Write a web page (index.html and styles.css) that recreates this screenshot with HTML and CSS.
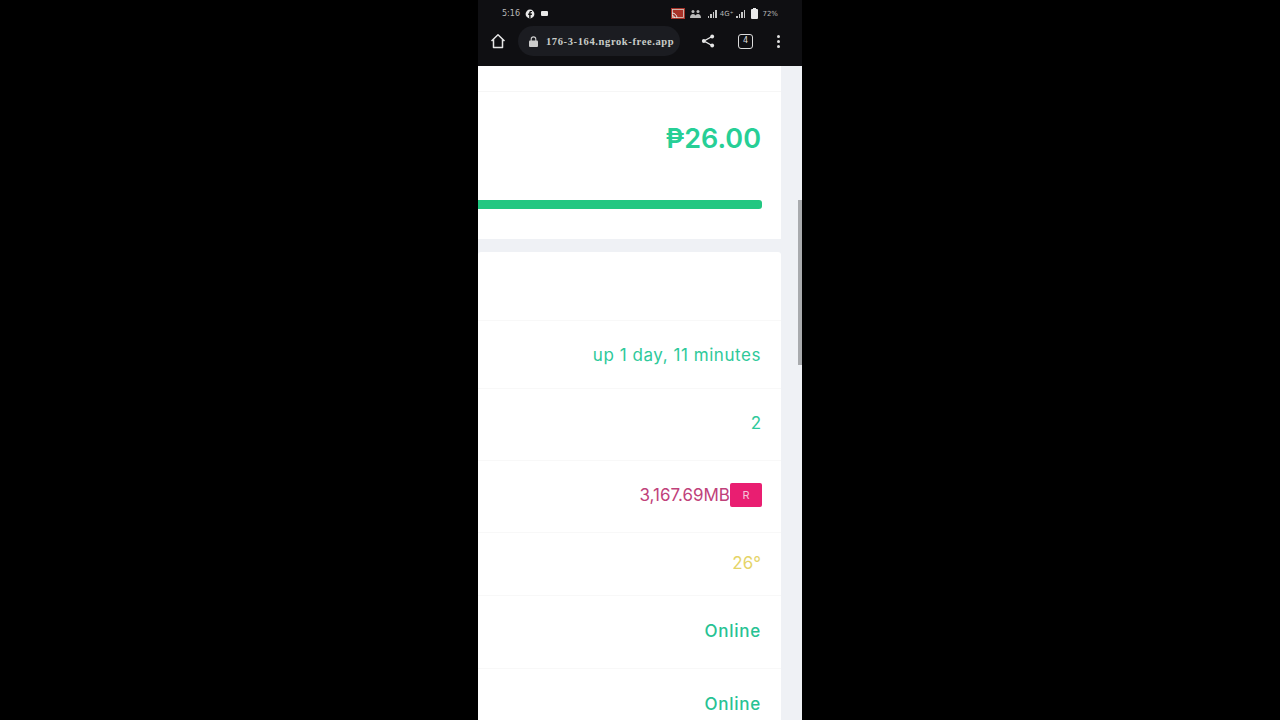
FILE: index.html
```html
<!DOCTYPE html>
<html lang="en">
<head>
<meta charset="utf-8">
<title>Status</title>
<link rel="stylesheet" href="styles.css">
</head>
<body>
<div class="phone">
  <div class="status">
    <div class="status-left">
      <span>5:16</span>
      <svg class="fb" viewBox="0 0 10 10"><circle cx="5" cy="5" r="4.4" fill="#e8e8e8"/><path d="M5.6 9.4V6h1.2l.2-1.4H5.6v-.8c0-.5.2-.7.7-.7H7V2h-1C4.800 2 4.200 2.700 4.200 3.700v.9H3.200V6h1v3.400z" fill="#111"/></svg>
      <span class="rec"></span>
    </div>
    <div class="status-right">
      <svg class="cast" viewBox="0 0 14 11"><rect width="14" height="11" fill="#a83228"/><rect x="1.500" y="1.500" width="11" height="8" fill="none" stroke="#d8d0c8" stroke-width=".8"/><path d="M1 5a5 5 0 0 1 5 5M1 7.500a2.500 2.500 0 0 1 2.500 2.500" fill="none" stroke="#e8e8e8"/></svg>
      <svg class="people" viewBox="0 0 11 9"><g fill="#bbb"><circle cx="3" cy="2.500" r="1.500"/><circle cx="8" cy="2.500" r="1.500"/><path d="M0 9c0-3 1.500-4 3-4s2 .8 2.500 1.500C6 5.800 6.500 5 8 5s3 1 3 4z"/></g></svg>
      <span class="bars"><i class="b1"></i><i class="b2"></i><i class="b3"></i><i class="b4"></i></span>
      <span class="net">4G⁺</span>
      <span class="bars"><i class="b1"></i><i class="b2"></i><i class="b3"></i><i class="b4"></i></span>
      <svg class="batt" viewBox="0 0 7 11"><rect x="2" width="3" height="2" fill="#e8e8e8"/><rect y="1" width="7" height="10" rx="1" fill="#e8e8e8"/></svg>
      <span class="level">72%</span>
    </div>
  </div>
  <div class="toolbar">
    <svg class="home" viewBox="0 0 16 16"><path d="M1.500 8 8 1.800 14.500 8M3.500 6.500v8h9v-8" fill="none" stroke="#e6e6e6" stroke-width="1.500" stroke-linejoin="round"/></svg>
    <div class="url">
      <svg class="lock" viewBox="0 0 9 11"><path d="M2.200 5V3.200a2.300 2.300 0 0 1 4.600 0V5" fill="none" stroke="#ccc" stroke-width="1.100"/><rect y="4.500" width="9" height="6.500" rx="1" fill="#ccc"/></svg>
      <span class="url-text">176-3-164.ngrok-free.app</span>
    </div>
    <svg class="share" viewBox="0 0 14 14"><path d="M11 2.500 3 7l8 4.500" fill="none" stroke="#e6e6e6" stroke-width="1.400"/><circle cx="11.200" cy="2.500" r="1.900" fill="#e6e6e6"/><circle cx="2.800" cy="7" r="1.900" fill="#e6e6e6"/><circle cx="11.200" cy="11.500" r="1.900" fill="#e6e6e6"/></svg>
    <span class="tabs">4</span>
    <span class="dots"><i></i><i></i><i></i></span>
  </div>
  <div class="page">
    <main class="content">
      <section class="card card-top">
        <div class="top-strip"></div>
        <div class="amount">₱26.00</div>
        <div class="progress"></div>
      </section>
      <section class="card card-list">
        <div class="row row-head"></div>
        <div class="row row-uptime green">up 1 day, 11 minutes</div>
        <div class="row row-users green">2</div>
        <div class="row row-mem pink"><span>3,167.69MB</span><span class="badge">R</span></div>
        <div class="row row-temp yellow">26°</div>
        <div class="row row-on1 green strong">Online</div>
        <div class="row row-on2 green strong">Online</div>
      </section>
    </main>
    <aside class="gutter"><div class="thumb"></div></aside>
  </div>
</div>
</body>
</html>
```
FILE: styles.css
```css
* { box-sizing: border-box; }
html, body { height: 100%; }
body {
  margin: 0;
  background: #000;
  display: flex;
  justify-content: center;
  overflow: hidden;
  font-family: "Inter", "Liberation Sans", sans-serif;
}
.phone {
  width: 324px;
  height: 720px;
  display: flex;
  flex-direction: column;
  background: #0f0f12;
  overflow: hidden;
}
.status {
  height: 27px;
  flex: none;
  display: flex;
  justify-content: space-between;
  align-items: center;
  padding: 0 24px;
  color: #b8b8b8;
  font: 8px "DejaVu Sans", sans-serif;
}
.status-left, .status-right { display: flex; align-items: center; }
.status-left { gap: 5px; }
.status-right { gap: 3px; }
.fb { width: 10px; height: 10px; }
.rec { width: 7px; height: 5px; margin-left: 1px; background: #e8e8e8; border-radius: 1px; }
.cast { width: 14px; height: 11px; margin-right: 2px; }
.people { width: 11px; height: 9px; margin-right: 4px; }
.net { font-size: 7px; }
.level { font-size: 7px; margin-left: 1px; }
.bars { display: flex; align-items: flex-end; gap: 1px; height: 8px; }
.bars i { width: 1.500px; background: #c8c8c8; display: block; }
.b1 { height: 2px; }
.b2 { height: 4px; }
.b3 { height: 6px; }
.b4 { height: 8px; }
.batt { width: 7px; height: 11px; margin-left: 3px; }
.toolbar {
  height: 38px;
  flex: none;
  display: flex;
  align-items: center;
  padding: 0 0 10px 12px;
}
.home { width: 16px; height: 16px; flex: none; }
.url {
  width: 162px;
  height: 30px;
  margin-left: 12px;
  padding-left: 11px;
  border-radius: 15px;
  background: #1b1c21;
  display: flex;
  align-items: center;
  gap: 8px;
  flex: none;
}
.lock { width: 9px; height: 11px; flex: none; }
.url-text {
  color: #c9cdc9;
  font: 700 10.500px "Liberation Serif", serif;
  letter-spacing: .62px;
  white-space: nowrap;
}
.share { width: 14px; height: 14px; margin-left: 21px; flex: none; }
.tabs {
  width: 15px;
  height: 15px;
  margin-left: 23px;
  flex: none;
  border: 1.500px solid #dcdcdc;
  border-radius: 3px;
  color: #dcdcdc;
  font: 8px/12px "DejaVu Sans", sans-serif;
  text-align: center;
}
.dots {
  margin-left: 24px;
  display: flex;
  flex-direction: column;
  gap: 2px;
}
.dots i { width: 3px; height: 3px; border-radius: 50%; background: #e0e0e0; display: block; }
.page {
  flex: 1;
  min-height: 0;
  display: flex;
  margin-top: 1px;
  background: #eff1f5;
  overflow: hidden;
}
.content { width: 303px; flex: none; }
.gutter { flex: 1; display: flex; justify-content: flex-end; }
.thumb {
  width: 4px;
  height: 165px;
  margin-top: 134px;
  background: #a9abae;
}
.card { background: #fff; }
.card-top { height: 173px; }
.top-strip { height: 26px; border-bottom: 1px solid #f6f6f6; }
.amount {
  margin-top: 30px;
  padding-right: 20px;
  text-align: right;
  color: #27cf96;
  font-size: 27px;
  line-height: 34px;
  font-weight: 600;
}
.progress {
  height: 9px;
  width: 284px;
  margin-top: 44px;
  border-radius: 0 3px 3px 0;
  background: #22c781;
}
.card-list { margin-top: 13px; border-radius: 3px 3px 0 0; }
.row {
  display: flex;
  justify-content: flex-end;
  align-items: center;
  padding-right: 20px;
  border-bottom: 1px solid #f8f8f8;
  font-size: 17px;
  white-space: nowrap;
}
.row-head { height: 69px; }
.row-uptime { height: 68px; letter-spacing: .55px; }
.row-users { height: 72px; padding-bottom: 4px; }
.row-mem { height: 72px; padding-bottom: 3px; padding-right: 19px; }
.row-temp { height: 63px; padding-bottom: 2px; }
.row-on1 { height: 73px; padding-bottom: 2px; }
.row-on2 { height: 73px; padding-bottom: 3px; border-bottom: 0; }
.green { color: #2ec99a; }
.pink { color: #c0417a; }
.yellow { color: #e5d468; }
.strong { font-weight: 500; color: #27c293; letter-spacing: .75px; }
.badge {
  width: 32px;
  height: 24px;
  background: #e91e71;
  color: #f5c4d8;
  border-radius: 2px;
  font-size: 11px;
  line-height: 24px;
  text-align: center;
}
```
